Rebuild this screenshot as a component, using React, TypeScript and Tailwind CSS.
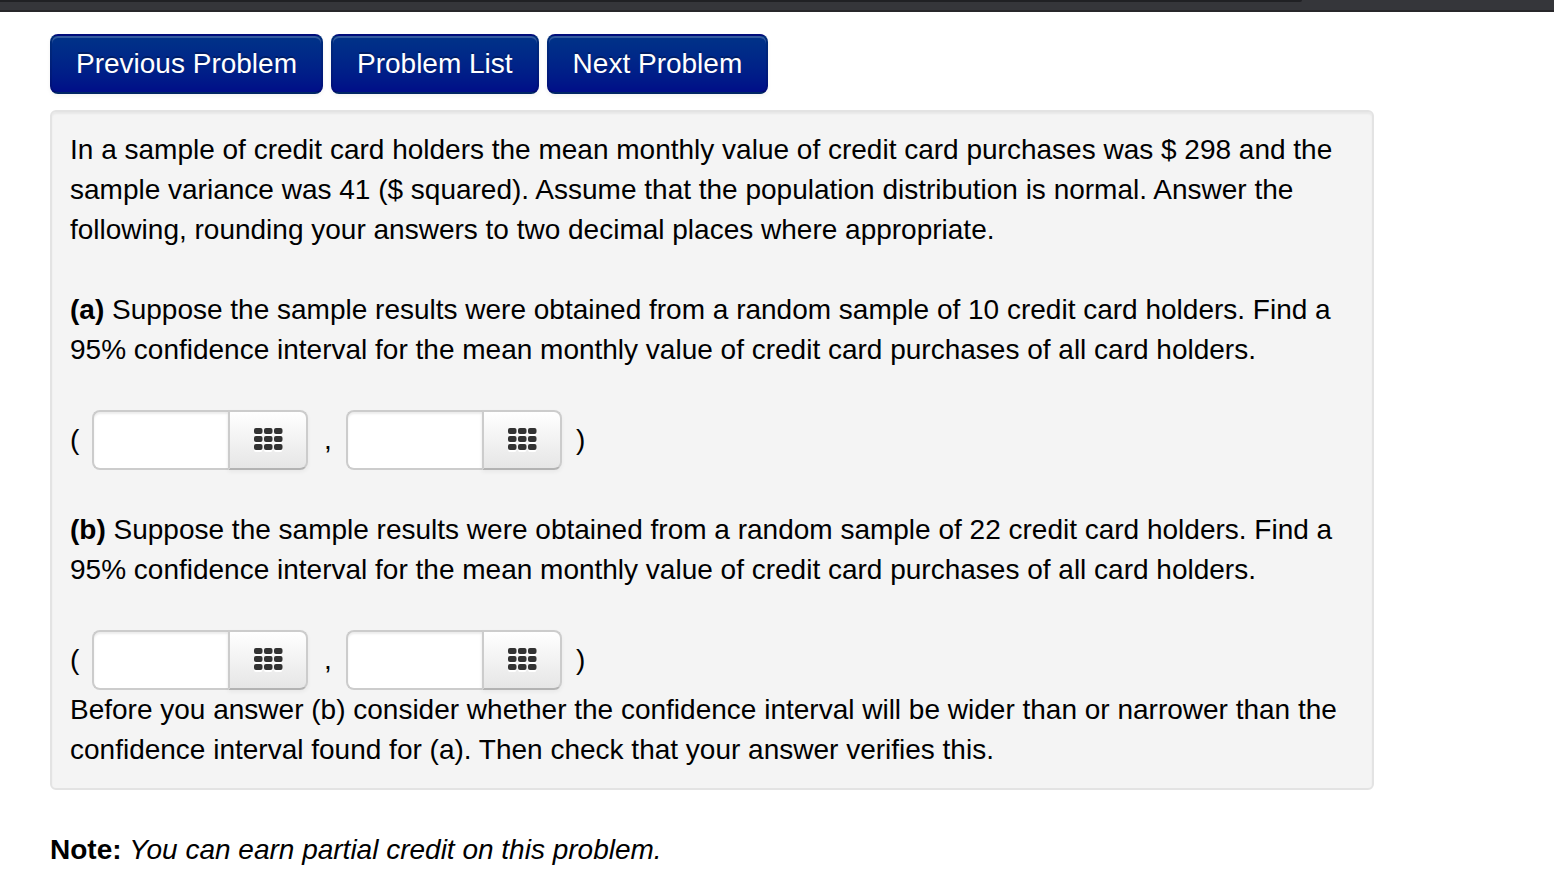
import React from 'react';

const NAV_LINKS = ['Previous Problem', 'Problem List', 'Next Problem'];

function KeypadIcon() {
  return (
    <svg width="30" height="24" viewBox="0 0 30 24" className="overflow-visible" aria-hidden="true">
      {[0, 8, 16].map((y) =>
        [1, 11, 21].map((x) => (
          <g key={`${x}-${y}`}>
            <rect x={x} y={y + 2} width="8.5" height="6" rx="2" fill="#ffffff" />
            <rect x={x} y={y} width="8.5" height="6" rx="2" fill="#333333" />
          </g>
        ))
      )}
    </svg>
  );
}

function AnswerBox({ label }: { label: string }) {
  return (
    <div className="flex h-[60px] w-[216px]">
      <input
        type="text"
        aria-label={label}
        className="min-w-0 flex-1 rounded-l-lg border-2 border-r-0 border-[#cccccc] bg-white px-3 shadow-[inset_0_2px_2px_rgba(0,0,0,0.075)] outline-none"
      />
      <button
        type="button"
        aria-label={`Open equation editor for ${label}`}
        className="flex w-20 items-center justify-center rounded-r-lg border-2 border-[#cccccc] border-b-[#b3b3b3] bg-linear-to-b from-white to-[#e6e6e6] shadow-[inset_0_2px_0_rgba(255,255,255,0.2),0_2px_4px_rgba(0,0,0,0.05)]"
      >
        <KeypadIcon />
      </button>
    </div>
  );
}

function Interval({ part }: { part: string }) {
  return (
    <div className="flex items-center">
      <span className="w-[22px]">(</span>
      <AnswerBox label={`part ${part} lower bound`} />
      <span className="w-[38px] pl-4">,</span>
      <AnswerBox label={`part ${part} upper bound`} />
      <span className="pl-3.5">)</span>
    </div>
  );
}

export default function App() {
  return (
    <div className="min-h-screen bg-white font-['Liberation_Sans',Arial,sans-serif] text-[28px] leading-10 text-black">
      {/* Bottom edge of the browser toolbar */}
      <div className="h-3 border-b-2 border-[#28272a] bg-[#35363a]">
        <div className="mr-[252px] h-0.5 rounded-br-full bg-[#202124]"></div>
      </div>

      <main className="pt-[22px] pr-[180px] pl-[50px]">
        {/* Problem navigation */}
        <nav className="flex gap-2">
          {NAV_LINKS.map((label) => (
            <a
              key={label}
              href="#"
              className="flex h-[60px] items-center rounded-lg border-2 border-black/10 border-b-black/25 bg-linear-to-b from-[#003388] to-[#000d88] px-6 whitespace-nowrap text-white shadow-[inset_0_2px_0_rgba(255,255,255,0.2),0_2px_4px_rgba(0,0,0,0.05)] [text-shadow:0_-2px_0_rgba(0,0,0,0.25)]"
            >
              {label}
            </a>
          ))}
        </nav>

        {/* Problem body */}
        <section className="mt-4 rounded-md border-2 border-[#e3e3e3] bg-[#f4f4f4] p-[18px] shadow-[inset_0_2px_2px_rgba(0,0,0,0.05)]">
          <p>
            In a sample of credit card holders the mean monthly value of credit card purchases was $ 298 and the
            sample variance was 41 ($ squared). Assume that the population distribution is normal. Answer the
            following, rounding your answers to two decimal places where appropriate.
          </p>
          <p className="mt-10 mb-10">
            <b>(a)</b> Suppose the sample results were obtained from a random sample of 10 credit card holders. Find a
            95% confidence interval for the mean monthly value of credit card purchases of all card holders.
          </p>
          <Interval part="a" />
          <p className="mt-10 mb-10">
            <b>(b)</b> Suppose the sample results were obtained from a random sample of 22 credit card holders. Find a
            95% confidence interval for the mean monthly value of credit card purchases of all card holders.
          </p>
          <Interval part="b" />
          <p>
            Before you answer (b) consider whether the confidence interval will be wider than or narrower than the
            confidence interval found for (a). Then check that your answer verifies this.
          </p>
        </section>

        <p className="mt-10">
          <b>Note:</b> <i>You can earn partial credit on this problem.</i>
        </p>
      </main>
    </div>
  );
}
